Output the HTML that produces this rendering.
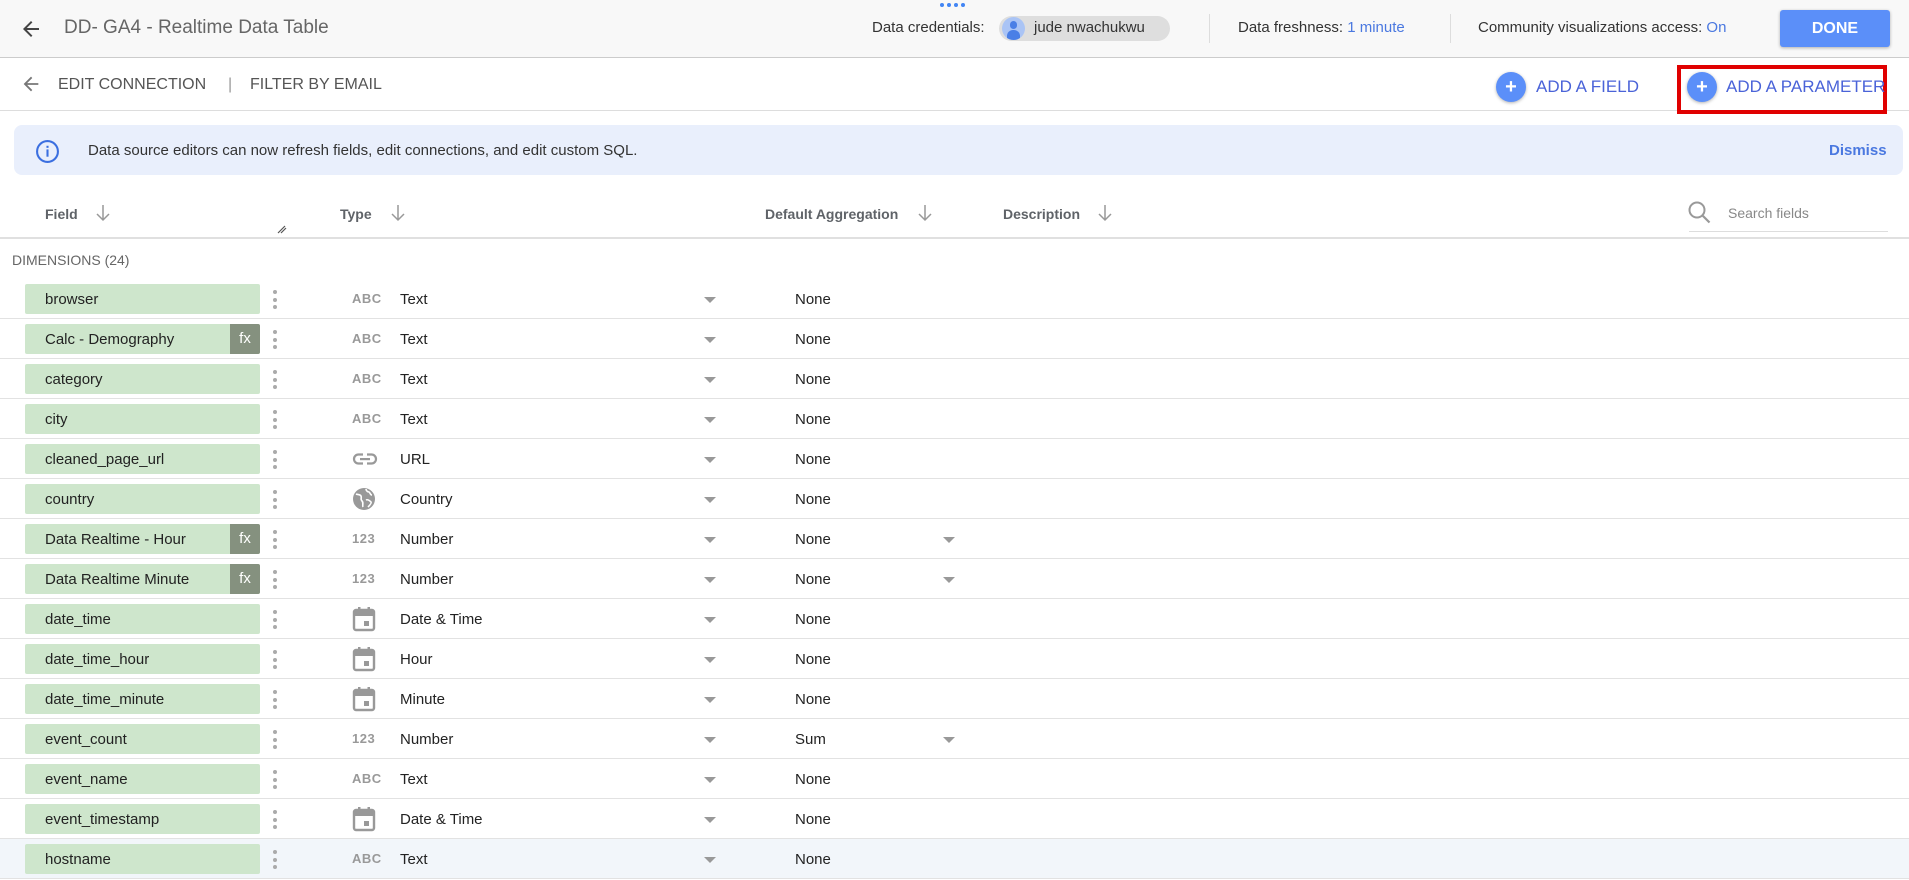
<!DOCTYPE html>
<html><head><meta charset="utf-8">
<style>
*{margin:0;padding:0;box-sizing:border-box}
body{width:1909px;height:864px;overflow:hidden;background:#fff;font-family:"Liberation Sans",sans-serif;position:relative;color:#202124}
.a{position:absolute;white-space:nowrap}
.top{position:absolute;left:0;top:0;width:1909px;height:58px;background:#f8f8f8;border-bottom:1px solid #ccc}
.bar2{position:absolute;left:0;top:58px;width:1909px;height:53px;border-bottom:1px solid #ddd}
.row{position:absolute;left:0;width:1909px;height:40px;border-bottom:1px solid #e2e2e2}
.chip{position:absolute;left:25px;top:5px;width:235px;height:30px;background:#cee6cc;border-radius:2px;font-size:15px;line-height:31px;padding-left:20px;color:#222}
.fx{position:absolute;right:0;top:0;width:30px;height:30px;background:#85917f;color:#fff;text-align:center;font-size:15px;line-height:30px;border-radius:0 2px 2px 0}
.dots{position:absolute;left:273px;top:11px;width:4px}
.dots i{display:block;width:4px;height:4px;border-radius:2px;background:#aaa;margin-bottom:3.5px}
.ic{position:absolute;left:352px;top:9px;width:26px;height:22px;color:#999;font-size:13px;font-weight:bold;line-height:22px;letter-spacing:0.5px}
.ty{position:absolute;left:400px;top:1px;line-height:40px;font-size:15px;color:#222}
.dd{position:absolute;left:704px;top:18px;width:0;height:0;border-left:6px solid transparent;border-right:6px solid transparent;border-top:6px solid #999}
.dd2{left:943px}
.ag{position:absolute;left:795px;top:1px;line-height:40px;font-size:15px;color:#222}
.hd{font-size:14px;color:#5f6368;font-weight:bold}
</style></head><body>
<div class="top"></div>
<div class="a" style="left:940px;top:3px;font-size:0">
<span style="display:inline-block;width:4px;height:4px;border-radius:2px;background:#4285f4;margin-right:3px"></span><span style="display:inline-block;width:4px;height:4px;border-radius:2px;background:#4285f4;margin-right:3px"></span><span style="display:inline-block;width:4px;height:4px;border-radius:2px;background:#4285f4;margin-right:3px"></span><span style="display:inline-block;width:4px;height:4px;border-radius:2px;background:#4285f4"></span></div>
<svg class="a" style="left:19px;top:17px" width="24" height="24" viewBox="0 0 24 24"><path d="M20 11H7.8l5.6-5.6L12 4l-8 8 8 8 1.4-1.4L7.8 13H20z" fill="#444"/></svg>
<div class="a" style="left:64px;top:17px;font-size:19px;color:#666">DD- GA4 - Realtime Data Table</div>
<div class="a" style="left:872px;top:19px;font-size:15px;color:#333">Data credentials:</div>
<div class="a" style="left:999px;top:16px;width:171px;height:25px;border-radius:13px;background:#dedede"></div>
<div class="a" style="left:1002px;top:17px;width:23px;height:23px;border-radius:12px;background:#aac4f5;overflow:hidden"><div style="position:absolute;left:8px;top:4px;width:7px;height:8px;border-radius:4px;background:#4a7fe6"></div><div style="position:absolute;left:5px;top:13px;width:13px;height:10px;border-radius:6px 6px 0 0;background:#4a7fe6"></div></div>
<div class="a" style="left:1034px;top:19px;font-size:15px;color:#333">jude nwachukwu</div>
<div class="a" style="left:1209px;top:14px;width:1px;height:29px;background:#ddd"></div>
<div class="a" style="left:1238px;top:19px;font-size:15px;color:#333">Data freshness: <span style="color:#4a78e0">1 minute</span></div>
<div class="a" style="left:1450px;top:14px;width:1px;height:29px;background:#ddd"></div>
<div class="a" style="left:1478px;top:19px;font-size:15px;color:#333">Community visualizations access: <span style="color:#4a78e0">On</span></div>
<div class="a" style="left:1780px;top:10px;width:110px;height:37px;background:#5b8ff9;border-radius:3px;box-shadow:0 1px 3px rgba(0,0,0,.3);color:#fff;font-weight:bold;font-size:16px;text-align:center;line-height:37px">DONE</div>

<div class="bar2"></div>
<svg class="a" style="left:20px;top:73px" width="22" height="22" viewBox="0 0 24 24"><path d="M20 11H7.8l5.6-5.6L12 4l-8 8 8 8 1.4-1.4L7.8 13H20z" fill="#777"/></svg>
<div class="a" style="left:58px;top:76px;font-size:16px;color:#555">EDIT CONNECTION</div>
<div class="a" style="left:228px;top:76px;font-size:16px;color:#999">|</div>
<div class="a" style="left:250px;top:76px;font-size:16px;color:#555">FILTER BY EMAIL</div>
<div class="a" style="left:1496px;top:72px;width:30px;height:30px;border-radius:15px;background:#5b8ff9;box-shadow:0 1px 3px rgba(0,0,0,.3);color:#fff;font-size:20px;font-weight:bold;text-align:center;line-height:30px">+</div>
<div class="a" style="left:1536px;top:77px;font-size:17px;color:#4a63d8">ADD A FIELD</div>
<div class="a" style="left:1677px;top:65px;width:210px;height:49px;border:4px solid #e00000"></div>
<div class="a" style="left:1687px;top:72px;width:30px;height:30px;border-radius:15px;background:#5b8ff9;box-shadow:0 1px 3px rgba(0,0,0,.3);color:#fff;font-size:20px;font-weight:bold;text-align:center;line-height:30px">+</div>
<div class="a" style="left:1726px;top:77px;font-size:17px;color:#4a63d8">ADD A PARAMETER</div>

<div class="a" style="left:14px;top:125px;width:1889px;height:50px;background:#e9effc;border-radius:8px"></div>
<svg class="a" style="left:35px;top:139px" width="25" height="25" viewBox="0 0 24 24"><circle cx="12" cy="12" r="10" fill="none" stroke="#3b6fe0" stroke-width="2"/><rect x="11" y="10" width="2" height="7" fill="#3b6fe0"/><rect x="11" y="6.5" width="2" height="2" fill="#3b6fe0"/></svg>
<div class="a" style="left:88px;top:142px;font-size:15px;color:#333">Data source editors can now refresh fields, edit connections, and edit custom SQL.</div>
<div class="a" style="left:1829px;top:142px;font-size:15px;color:#4a78e0;font-weight:bold">Dismiss</div>

<div class="a hd" style="left:45px;top:206px">Field</div>
<div class="a hd" style="left:340px;top:206px">Type</div>
<div class="a hd" style="left:765px;top:206px">Default Aggregation</div>
<div class="a hd" style="left:1003px;top:206px">Description</div>
<svg class="a" style="left:95px;top:204px" width="16" height="18" viewBox="0 0 16 18"><path d="M8 1v15M2 10l6 6 6-6" fill="none" stroke="#999" stroke-width="1.5"/></svg>
<svg class="a" style="left:390px;top:204px" width="16" height="18" viewBox="0 0 16 18"><path d="M8 1v15M2 10l6 6 6-6" fill="none" stroke="#999" stroke-width="1.5"/></svg>
<svg class="a" style="left:917px;top:204px" width="16" height="18" viewBox="0 0 16 18"><path d="M8 1v15M2 10l6 6 6-6" fill="none" stroke="#999" stroke-width="1.5"/></svg>
<svg class="a" style="left:1097px;top:204px" width="16" height="18" viewBox="0 0 16 18"><path d="M8 1v15M2 10l6 6 6-6" fill="none" stroke="#999" stroke-width="1.5"/></svg>
<svg class="a" style="left:277px;top:224px" width="10" height="10" viewBox="0 0 10 10"><path d="M1 9L8 2M4 9l5-5" stroke="#555" stroke-width="1.2"/></svg>
<svg class="a" style="left:1687px;top:200px" width="26" height="26" viewBox="0 0 26 26"><circle cx="10" cy="10" r="7.5" fill="none" stroke="#999" stroke-width="2"/><path d="M15.5 15.5l7 7" stroke="#999" stroke-width="2.2"/></svg>
<div class="a" style="left:1728px;top:205px;font-size:14px;color:#888">Search fields</div>
<div class="a" style="left:1689px;top:231px;width:199px;height:1px;background:#ddd"></div>
<div class="a" style="left:0;top:237px;width:1909px;height:2px;background:#e0e0e0"></div>
<div class="a" style="left:12px;top:252px;font-size:14px;color:#666">DIMENSIONS (24)</div>

<div class="row" style="top:279px"><div class="chip">browser</div><div class="dots"><i></i><i></i><i></i></div><div class="ic">ABC</div><div class="ty">Text</div><div class="dd"></div><div class="ag">None</div></div>
<div class="row" style="top:319px"><div class="chip">Calc - Demography<div class="fx">fx</div></div><div class="dots"><i></i><i></i><i></i></div><div class="ic">ABC</div><div class="ty">Text</div><div class="dd"></div><div class="ag">None</div></div>
<div class="row" style="top:359px"><div class="chip">category</div><div class="dots"><i></i><i></i><i></i></div><div class="ic">ABC</div><div class="ty">Text</div><div class="dd"></div><div class="ag">None</div></div>
<div class="row" style="top:399px"><div class="chip">city</div><div class="dots"><i></i><i></i><i></i></div><div class="ic">ABC</div><div class="ty">Text</div><div class="dd"></div><div class="ag">None</div></div>
<div class="row" style="top:439px"><div class="chip">cleaned_page_url</div><div class="dots"><i></i><i></i><i></i></div><div class="ic"><svg width="26" height="22" viewBox="0 0 26 22"><rect x="2" y="6.5" width="22" height="9" rx="4.5" fill="none" stroke="#999" stroke-width="2.2"/><rect x="11" y="4" width="4" height="14" fill="#fff"/><rect x="8" y="10" width="10" height="2.2" fill="#999"/></svg></div><div class="ty">URL</div><div class="dd"></div><div class="ag">None</div></div>
<div class="row" style="top:479px"><div class="chip">country</div><div class="dots"><i></i><i></i><i></i></div><div class="ic" style="top:8px"><svg width="24" height="24" viewBox="0 0 24 24"><circle cx="12" cy="12" r="11" fill="#999"/><path d="M4 7c2 1 4 0 5 2s-1 3 1 5 0 4 1 6M14 2c0 2 2 3 3 3s1 3 3 3M14 13c2-1 4 1 5 2s-2 4-3 5" fill="none" stroke="#fff" stroke-width="1.6"/></svg></div><div class="ty">Country</div><div class="dd"></div><div class="ag">None</div></div>
<div class="row" style="top:519px"><div class="chip">Data Realtime - Hour<div class="fx">fx</div></div><div class="dots"><i></i><i></i><i></i></div><div class="ic">123</div><div class="ty">Number</div><div class="dd"></div><div class="ag">None</div><div class="dd dd2"></div></div>
<div class="row" style="top:559px"><div class="chip">Data Realtime Minute<div class="fx">fx</div></div><div class="dots"><i></i><i></i><i></i></div><div class="ic">123</div><div class="ty">Number</div><div class="dd"></div><div class="ag">None</div><div class="dd dd2"></div></div>
<div class="row" style="top:599px"><div class="chip">date_time</div><div class="dots"><i></i><i></i><i></i></div><div class="ic" style="top:7px"><svg width="24" height="26" viewBox="0 0 24 26"><rect x="2" y="4" width="20" height="20" rx="2" fill="none" stroke="#999" stroke-width="2.4"/><rect x="2" y="4" width="20" height="6" fill="#999"/><rect x="6" y="1" width="2.5" height="5" fill="#999"/><rect x="15.5" y="1" width="2.5" height="5" fill="#999"/><rect x="12" y="15" width="5" height="5" fill="#999"/></svg></div><div class="ty">Date &amp; Time</div><div class="dd"></div><div class="ag">None</div></div>
<div class="row" style="top:639px"><div class="chip">date_time_hour</div><div class="dots"><i></i><i></i><i></i></div><div class="ic" style="top:7px"><svg width="24" height="26" viewBox="0 0 24 26"><rect x="2" y="4" width="20" height="20" rx="2" fill="none" stroke="#999" stroke-width="2.4"/><rect x="2" y="4" width="20" height="6" fill="#999"/><rect x="6" y="1" width="2.5" height="5" fill="#999"/><rect x="15.5" y="1" width="2.5" height="5" fill="#999"/><rect x="12" y="15" width="5" height="5" fill="#999"/></svg></div><div class="ty">Hour</div><div class="dd"></div><div class="ag">None</div></div>
<div class="row" style="top:679px"><div class="chip">date_time_minute</div><div class="dots"><i></i><i></i><i></i></div><div class="ic" style="top:7px"><svg width="24" height="26" viewBox="0 0 24 26"><rect x="2" y="4" width="20" height="20" rx="2" fill="none" stroke="#999" stroke-width="2.4"/><rect x="2" y="4" width="20" height="6" fill="#999"/><rect x="6" y="1" width="2.5" height="5" fill="#999"/><rect x="15.5" y="1" width="2.5" height="5" fill="#999"/><rect x="12" y="15" width="5" height="5" fill="#999"/></svg></div><div class="ty">Minute</div><div class="dd"></div><div class="ag">None</div></div>
<div class="row" style="top:719px"><div class="chip">event_count</div><div class="dots"><i></i><i></i><i></i></div><div class="ic">123</div><div class="ty">Number</div><div class="dd"></div><div class="ag">Sum</div><div class="dd dd2"></div></div>
<div class="row" style="top:759px"><div class="chip">event_name</div><div class="dots"><i></i><i></i><i></i></div><div class="ic">ABC</div><div class="ty">Text</div><div class="dd"></div><div class="ag">None</div></div>
<div class="row" style="top:799px"><div class="chip">event_timestamp</div><div class="dots"><i></i><i></i><i></i></div><div class="ic" style="top:7px"><svg width="24" height="26" viewBox="0 0 24 26"><rect x="2" y="4" width="20" height="20" rx="2" fill="none" stroke="#999" stroke-width="2.4"/><rect x="2" y="4" width="20" height="6" fill="#999"/><rect x="6" y="1" width="2.5" height="5" fill="#999"/><rect x="15.5" y="1" width="2.5" height="5" fill="#999"/><rect x="12" y="15" width="5" height="5" fill="#999"/></svg></div><div class="ty">Date &amp; Time</div><div class="dd"></div><div class="ag">None</div></div>
<div class="row" style="top:839px;background:#f2f6fa"><div class="chip">hostname</div><div class="dots"><i></i><i></i><i></i></div><div class="ic">ABC</div><div class="ty">Text</div><div class="dd"></div><div class="ag">None</div></div>
</body></html>
